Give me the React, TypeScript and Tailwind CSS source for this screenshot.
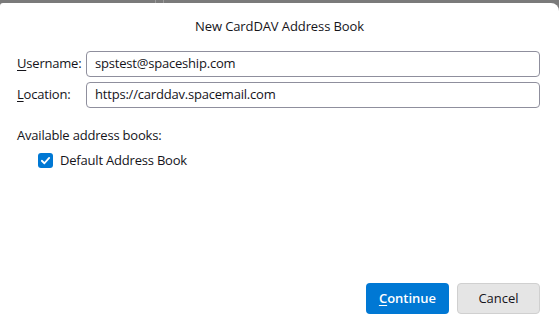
import React from "react";

export default function App() {
  return (
    <div className="w-[559px] h-[325px] bg-[#7a7a7a] overflow-hidden" style={{ fontFamily: '"Open Sans", "Noto Sans", sans-serif' }}>
      <div className="h-[3px] flex">
        <div className="w-[155px]" />
        <div className="w-[1px] bg-[#9a9a9a]" />
        <div className="w-[7px]" />
        <div className="w-[1px] bg-[#9a9a9a]" />
      </div>
      <div className="h-[322px] bg-white rounded-tl-[3px] rounded-tr-[8px] flex flex-col text-[13px] text-[#15141a]">
        <div className="h-[47px] flex items-center justify-center pt-[1px]">
          <span className="text-[13px] tracking-[-0.1px]">New CardDAV Address Book</span>
        </div>
        <div className="flex flex-col gap-[5px] pl-[17px] pr-[19px] pt-[1px]">
          <div className="flex items-center">
            <label className="w-[69px] tracking-[-0.2px]"><span className="underline underline-offset-2">U</span>sername:</label>
            <div className="flex-1 h-[26px] border border-[#8f8f9d] rounded-[4px] flex items-center px-[8px] tracking-[-0.2px]">spstest@spaceship.com</div>
          </div>
          <div className="flex items-center">
            <label className="w-[69px] tracking-[-0.2px]"><span className="underline underline-offset-2">L</span>ocation:</label>
            <div className="flex-1 h-[26px] border border-[#8f8f9d] rounded-[4px] flex items-center px-[8px] tracking-[-0.2px]">https://carddav.spacemail.com</div>
          </div>
        </div>
        <div className="pl-[17px] pt-[18px] tracking-[-0.2px]">Available address books:</div>
        <div className="flex items-center pl-[38px] pt-[5px] gap-[7px]">
          <div className="w-[15px] h-[15px] rounded-[3px] bg-[#0078d4] flex items-center justify-center">
            <svg width="11" height="11" viewBox="0 0 12 12">
              <path d="M2 6.3 L4.8 9 L10 3.2" stroke="white" strokeWidth="2" fill="none" strokeLinecap="round" strokeLinejoin="round" />
            </svg>
          </div>
          <span className="tracking-[-0.2px]">Default Address Book</span>
        </div>
        <div className="flex-1" />
        <div className="flex justify-end gap-[8px] pr-[19px] pb-[11px]">
          <button className="w-[83px] h-[31px] rounded-[4px] bg-[#0078d4] text-white font-semibold text-[13px]"><span className="underline underline-offset-2">C</span>ontinue</button>
          <button className="w-[83px] h-[31px] rounded-[4px] bg-[#e5e5e5] border border-[#d0d0d0] text-[#15141a] text-[13px]">Cancel</button>
        </div>
      </div>
    </div>
  );
}
